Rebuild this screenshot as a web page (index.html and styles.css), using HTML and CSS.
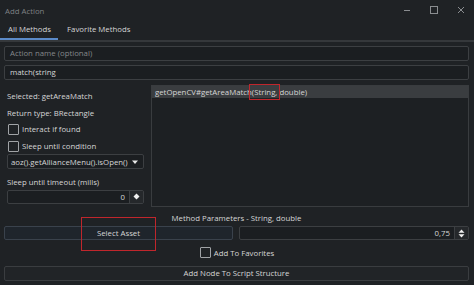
FILE: index.html
```html
<!DOCTYPE html>
<html lang="en">
<head>
    <meta charset="UTF-8">
    <meta name="viewport" content="width=device-width, initial-scale=1.0">
    <title>Add Action</title>
    <link rel="stylesheet" href="styles.css">
</head>
<body>
    <div class="titlebar">
        <span class="title">Add Action</span>
        <div class="controls">
            <svg width="10" height="10" viewBox="0 0 10 10"><path d="M2 5.5h6" stroke="#8a8d90" stroke-width="1"/></svg>
            <svg width="10" height="10" viewBox="0 0 10 10"><rect x="1.5" y="1.5" width="7" height="7" fill="none" stroke="#8a8d90" stroke-width="1"/></svg>
            <svg width="10" height="10" viewBox="0 0 10 10"><path d="M2 2l6 6M8 2l-6 6" stroke="#8a8d90" stroke-width="1"/></svg>
        </div>
    </div>

    <div class="tabs">
        <div class="tab active">All Methods</div>
        <div class="tab">Favorite Methods</div>
    </div>

    <div class="content">
        <div class="field placeholder">Action name (optional)</div>
        <div class="field">match(string</div>

        <div class="main">
            <div class="left">
                <div class="line">Selected: getAreaMatch</div>
                <div class="line">Return type: BRectangle</div>
                <div class="line check"><span class="box"></span>Interact if found</div>
                <div class="line check"><span class="box"></span>Sleep until condition</div>
                <div class="combo">
                    <span>aoz().getAllianceMenu().isOpen()</span>
                    <svg width="8" height="6" viewBox="0 0 8 6"><path d="M1 1.5h6L4 5z" fill="#e8e8e8"/></svg>
                </div>
                <div class="line">Sleep until timeout (mills)</div>
                <div class="spin small">
                    <span class="value">0</span>
                    <span class="spin-btn">
                        <svg width="7" height="7" viewBox="0 0 7 7"><path d="M3.5 0.5L6.5 3.5 3.5 6.5 0.5 3.5z" fill="#f0f0f0"/></svg>
                    </span>
                </div>
            </div>
            <div class="list">
                <div class="item selected">getOpenCV#getAreaMatch(String, double)</div>
                <div class="mark mark-param"></div>
            </div>
        </div>

        <div class="params-title">Method Parameters - String, double</div>
        <div class="params">
            <div class="button asset">Select Asset</div>
            <div class="spin">
                <span class="value">0,75</span>
                <span class="spin-btn">
                    <svg width="7" height="9" viewBox="0 0 7 9"><path d="M3.5 0.5L6.5 3.8H0.5zM3.5 8.5L6.5 5.2H0.5z" fill="#f0f0f0"/></svg>
                </span>
            </div>
            <div class="mark mark-asset"></div>
        </div>
        <div class="fav check"><span class="box"></span>Add To Favorites</div>
        <div class="button wide">Add Node To Script Structure</div>
    </div>
</body>
</html>
```

FILE: styles.css
```css
body {
    margin: 0;
    width: 474px;
    height: 285px;
    overflow: hidden;
    background-color: #1f2225;
    color: #d6d6d6;
    font-family: "Open Sans", "Noto Sans", sans-serif;
    font-size: 7.8px;
}
.titlebar {
    height: 20px;
    display: flex;
    align-items: center;
    justify-content: space-between;
    padding: 0 8px 0 5px;
}
.title {
    color: #7e8184;
    margin-top: 1px;
}
.controls {
    display: flex;
    gap: 17px;
}
.tabs {
    display: flex;
    height: 20px;
    border-bottom: 2px solid #35383b;
}
.tab {
    padding: 0 8px;
    line-height: 19px;
    white-space: nowrap;
}
.tab.active {
    border-bottom: 2px solid #5b8ac8;
    padding-right: 7px;
    margin-right: 1px;
}
.content {
    padding: 4px 5px 0 4px;
    display: flex;
    flex-direction: column;
}
.field {
    height: 13px;
    line-height: 13px;
    border: 1px solid #3c3f42;
    background-color: #1b1e21;
    border-radius: 2px;
    padding: 0 5px;
    margin-bottom: 4px;
}
.placeholder {
    color: #85888b;
}
.main {
    display: flex;
    gap: 7px;
    margin-top: 1px;
}
.left {
    width: 137px;
    padding-left: 3px;
    padding-top: 5px;
    display: flex;
    flex-direction: column;
}
.line {
    height: 16.5px;
    line-height: 12px;
    flex: none;
}
.check {
    display: flex;
    align-items: flex-start;
    gap: 3px;
}
.box {
    width: 9px;
    height: 9px;
    border: 1px solid #a0a3a6;
    border-radius: 1px;
    margin-left: 1px;
    margin-top: 1px;
}
.combo {
    flex: none;
    height: 13px;
    border: 1px solid #3c3f42;
    border-radius: 2px;
    background-color: #1b1e21;
    display: flex;
    align-items: center;
    justify-content: space-between;
    padding: 0 4px 0 3px;
    margin-top: -2px;
    margin-bottom: 7px;
}
.spin {
    flex: 1;
    height: 12px;
    border: 1px solid #3c3f42;
    border-radius: 2px;
    background-color: #1b1e21;
    display: flex;
    align-items: center;
    justify-content: flex-end;
}
.spin.small {
    flex: none;
    margin-top: -3px;
}
.spin .value {
    padding-right: 4px;
}
.spin-btn {
    width: 13px;
    height: 100%;
    border-left: 1px solid #3c3f42;
    display: flex;
    align-items: center;
    justify-content: center;
    background-color: #25282b;
}
.list {
    flex: 1;
    height: 120px;
    border: 1px solid #393c3f;
    background-color: #1d2023;
    position: relative;
}
.item {
    height: 12px;
    line-height: 12px;
    padding-left: 3px;
}
.item.selected {
    background-color: #3a3d40;
}
.mark {
    position: absolute;
    border: 1px solid #c0262c;
}
.mark-param {
    left: 97px;
    top: -2px;
    width: 29px;
    height: 14px;
}
.params-title {
    text-align: center;
    margin-top: 5px;
    height: 14px;
    line-height: 12px;
}
.params {
    display: flex;
    gap: 6px;
    position: relative;
}
.button {
    height: 12px;
    line-height: 12px;
    border: 1px solid #3a3d40;
    border-radius: 2px;
    background-color: #212427;
    text-align: center;
}
.button.asset {
    width: 227px;
    background-color: #1f252c;
    border-color: #3a424c;
}
.button.wide {
    height: 13px;
    line-height: 13px;
}
.mark-asset {
    left: 77px;
    top: -9px;
    width: 73px;
    height: 32px;
}
.fav {
    justify-content: center;
    height: 12px;
    line-height: 12px;
    margin: 7px 0 7px 0;
}
.fav .box {
    margin-top: 0;
}
```
